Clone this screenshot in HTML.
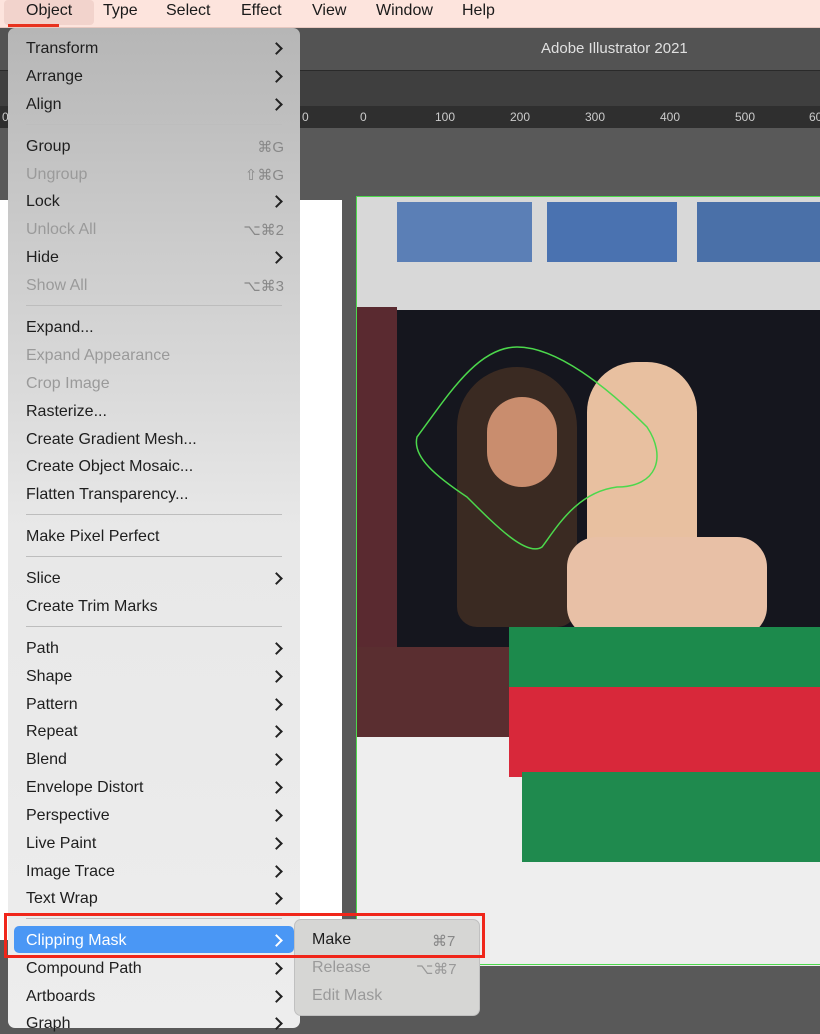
<html><head><style>
body{margin:0;width:820px;height:1024px;overflow:hidden;position:relative;background:#595959;font-family:"Liberation Sans",sans-serif}
.a{position:absolute}
.mi{position:absolute;left:26px;font-size:16px;color:#1e1e1e;line-height:20px;margin-top:2px}
.d{color:#9a9a9a}
.ar{position:absolute;left:271px;width:12px;height:20px;margin-top:2px}
.ar:after{content:"";position:absolute;left:1px;top:5px;width:7px;height:7px;border-right:2px solid #222;border-top:2px solid #222;transform:rotate(45deg)}
.w:after{border-color:#fff}
.sc{position:absolute;left:0;width:284px;text-align:right;font-size:15px;color:#888;margin-top:3px}
.sep{position:absolute;left:26px;width:256px;height:1px;background:#bdbdbd}
.r{position:absolute;top:110px;font-size:12px;color:#ccc}
</style></head><body>
<div class="a" style="left:0;top:0;width:820px;height:27px;background:#fde4dd;border-bottom:1px solid #e8c8c0"></div>
<div class="a" style="left:4px;top:0;width:90px;height:25px;background:#f2d3cc;border-radius:4px"></div>
<div class="a" style="left:8px;top:24px;width:51px;height:3px;background:#e8321e"></div>
<div class="a" style="top:2px;left:26px;font-size:16px;color:#1a1a1a">Object</div>
<div class="a" style="top:2px;left:103px;font-size:16px;color:#1a1a1a">Type</div>
<div class="a" style="top:2px;left:166px;font-size:16px;color:#1a1a1a">Select</div>
<div class="a" style="top:2px;left:241px;font-size:16px;color:#1a1a1a">Effect</div>
<div class="a" style="top:2px;left:312px;font-size:16px;color:#1a1a1a">View</div>
<div class="a" style="top:2px;left:376px;font-size:16px;color:#1a1a1a">Window</div>
<div class="a" style="top:2px;left:462px;font-size:16px;color:#1a1a1a">Help</div>
<div class="a" style="left:0;top:28px;width:820px;height:42px;background:#535353"></div>
<div class="a" style="left:541px;top:40px;font-size:15px;color:#e0e0e0">Adobe Illustrator 2021</div>
<div class="a" style="left:0;top:70px;width:820px;height:36px;background:#3f3f3f;border-top:1px solid #2a2a2a"></div>
<div class="a" style="left:0;top:106px;width:820px;height:22px;background:#2f2f2f"></div>
<div class="r" style="left:2px">0</div><div class="r" style="left:302px">0</div>
<div class="r" style="left:360px">0</div><div class="r" style="left:435px">100</div><div class="r" style="left:510px">200</div><div class="r" style="left:585px">300</div><div class="r" style="left:660px">400</div><div class="r" style="left:735px">500</div><div class="r" style="left:809px">60</div>
<div class="a" style="left:0;top:200px;width:342px;height:740px;background:#fff"></div>
<div class="a" style="left:357px;top:197px;width:463px;height:769px;background:#f0f0f0;overflow:hidden">
<div class="a" style="left:0;top:0;width:463px;height:115px;background:#d8d8d8"></div>
<div class="a" style="left:40px;top:5px;width:135px;height:60px;background:#5b7fb6"></div>
<div class="a" style="left:190px;top:5px;width:130px;height:60px;background:#4a72b0"></div>
<div class="a" style="left:340px;top:5px;width:123px;height:60px;background:#4a70a8"></div>
<div class="a" style="left:0;top:110px;width:40px;height:430px;background:#5a2a30"></div>
<div class="a" style="left:40px;top:113px;width:423px;height:340px;background:#15161e"></div>
<div class="a" style="left:0;top:450px;width:463px;height:95px;background:#5a2e30"></div>
<div class="a" style="left:0;top:540px;width:463px;height:229px;background:#eeeeee"></div>
<div class="a" style="left:100px;top:170px;width:120px;height:260px;background:#3a2a22;border-radius:60px 60px 20px 20px"></div>
<div class="a" style="left:130px;top:200px;width:70px;height:90px;background:#c98d6e;border-radius:35px"></div>
<div class="a" style="left:230px;top:165px;width:110px;height:280px;background:#e8c0a0;border-radius:50px 50px 30px 30px"></div>
<div class="a" style="left:210px;top:340px;width:200px;height:100px;background:#e8c0a6;border-radius:30px"></div>
<div class="a" style="left:152px;top:430px;width:311px;height:70px;background:#1c8a4c"></div>
<div class="a" style="left:152px;top:490px;width:311px;height:90px;background:#d8283a"></div>
<div class="a" style="left:165px;top:575px;width:298px;height:90px;background:#1f8a4e"></div>
<svg class="a" style="left:0;top:0" width="463" height="769"><path d="M60 240 C90 200,120 150,160 150 C200 150,250 190,290 230 C310 260,300 290,260 290 C220 295,200 330,185 350 C170 360,140 330,110 300 C80 280,55 260,60 240Z" fill="none" stroke="#4cd84c" stroke-width="1.5"/></svg>
</div>
<div class="a" style="left:356px;top:196px;width:470px;height:769px;border:1px solid #4cd84c;box-sizing:border-box"></div>
<div class="a" style="left:8px;top:28px;width:292px;height:1000px;border-radius:7px;background:linear-gradient(#b6b6b6 0px,#cfcfcf 250px,#e8e8e8 500px,#ededed 1000px)"></div>
<div class="a" style="left:14px;top:926px;width:280px;height:27px;border-radius:5px;background:#4a97f5"></div>
<div class="mi" style="top:37px">Transform</div><div class="ar" style="top:37px"></div>
<div class="mi" style="top:65px">Arrange</div><div class="ar" style="top:65px"></div>
<div class="mi" style="top:93px">Align</div><div class="ar" style="top:93px"></div>
<div class="sep" style="top:124px"></div>
<div class="mi" style="top:135px">Group</div><div class="sc" style="top:135px">⌘G</div>
<div class="mi d" style="top:163px">Ungroup</div><div class="sc" style="top:163px">⇧⌘G</div>
<div class="mi" style="top:190px">Lock</div><div class="ar" style="top:190px"></div>
<div class="mi d" style="top:218px">Unlock All</div><div class="sc" style="top:218px">⌥⌘2</div>
<div class="mi" style="top:246px">Hide</div><div class="ar" style="top:246px"></div>
<div class="mi d" style="top:274px">Show All</div><div class="sc" style="top:274px">⌥⌘3</div>
<div class="sep" style="top:305px"></div>
<div class="mi" style="top:316px">Expand...</div>
<div class="mi d" style="top:344px">Expand Appearance</div>
<div class="mi d" style="top:372px">Crop Image</div>
<div class="mi" style="top:400px">Rasterize...</div>
<div class="mi" style="top:428px">Create Gradient Mesh...</div>
<div class="mi" style="top:455px">Create Object Mosaic...</div>
<div class="mi" style="top:483px">Flatten Transparency...</div>
<div class="sep" style="top:514px"></div>
<div class="mi" style="top:525px">Make Pixel Perfect</div>
<div class="sep" style="top:556px"></div>
<div class="mi" style="top:567px">Slice</div><div class="ar" style="top:567px"></div>
<div class="mi" style="top:595px">Create Trim Marks</div>
<div class="sep" style="top:626px"></div>
<div class="mi" style="top:637px">Path</div><div class="ar" style="top:637px"></div>
<div class="mi" style="top:665px">Shape</div><div class="ar" style="top:665px"></div>
<div class="mi" style="top:693px">Pattern</div><div class="ar" style="top:693px"></div>
<div class="mi" style="top:720px">Repeat</div><div class="ar" style="top:720px"></div>
<div class="mi" style="top:748px">Blend</div><div class="ar" style="top:748px"></div>
<div class="mi" style="top:776px">Envelope Distort</div><div class="ar" style="top:776px"></div>
<div class="mi" style="top:804px">Perspective</div><div class="ar" style="top:804px"></div>
<div class="mi" style="top:832px">Live Paint</div><div class="ar" style="top:832px"></div>
<div class="mi" style="top:860px">Image Trace</div><div class="ar" style="top:860px"></div>
<div class="mi" style="top:887px">Text Wrap</div><div class="ar" style="top:887px"></div>
<div class="sep" style="top:918px"></div>
<div class="mi" style="top:929px;color:#fff">Clipping Mask</div><div class="ar w" style="top:929px"></div>
<div class="mi" style="top:957px">Compound Path</div><div class="ar" style="top:957px"></div>
<div class="mi" style="top:985px">Artboards</div><div class="ar" style="top:985px"></div>
<div class="mi" style="top:1012px">Graph</div><div class="ar" style="top:1012px"></div>
<div class="a" style="left:294px;top:919px;width:184px;height:95px;border-radius:7px;background:#d6d6d4;border:1px solid #c0c0c0"></div>
<div class="a" style="left:312px;top:931px;font-size:16px;color:#1e1e1e">Make</div><div class="a" style="left:432px;top:932px;font-size:15px;color:#888">⌘7</div>
<div class="a" style="left:312px;top:959px;font-size:16px;color:#9a9a9a">Release</div><div class="a" style="left:416px;top:960px;font-size:15px;color:#999">⌥⌘7</div>
<div class="a" style="left:312px;top:987px;font-size:16px;color:#9a9a9a">Edit Mask</div>
<div class="a" style="left:4px;top:913px;width:481px;height:45px;border:3px solid #f0261a;box-sizing:border-box"></div>
</body></html>
